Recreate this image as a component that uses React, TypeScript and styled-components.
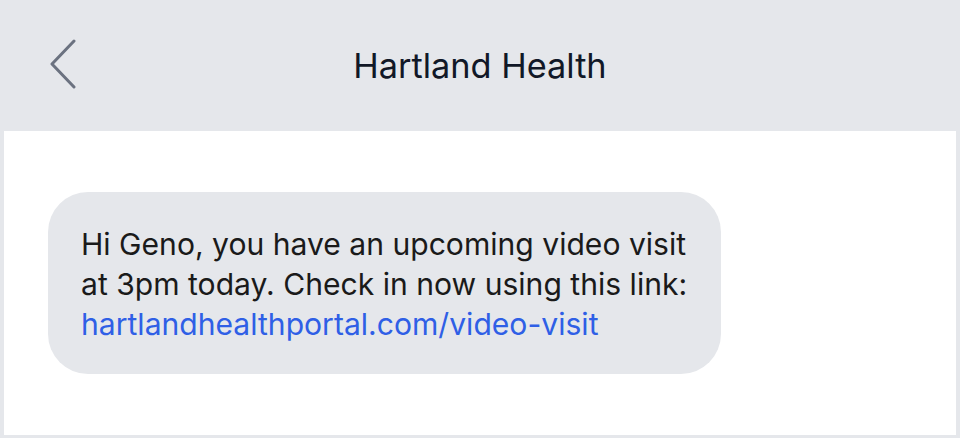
import styled, { createGlobalStyle } from "styled-components";

const GlobalStyle = createGlobalStyle`
  html, body {
    margin: 0;
    padding: 0;
    background: #e5e7eb;
  }
  body {
    font-family: Inter, "Noto Sans", "Liberation Sans", sans-serif;
    -webkit-font-smoothing: antialiased;
  }
`;

const App = () => {
  return (
    <>
      <GlobalStyle />
      <Screen>
        <Header>
          <BackButton aria-label="Back">
            <svg width="28" height="50" viewBox="0 0 28 50" fill="none">
              <path
                d="M25 2 L3 25 L25 48"
                stroke="#6b7280"
                strokeWidth="3"
                strokeLinecap="round"
                strokeLinejoin="round"
              />
            </svg>
          </BackButton>
          <Title>Hartland Health</Title>
        </Header>
        <Thread>
          <Bubble>
            Hi Geno, you have an upcoming video visit
            <br />
            at 3pm today. Check in now using this link:
            <br />
            <Link href="#">hartlandhealthportal.com/video-visit</Link>
          </Bubble>
        </Thread>
      </Screen>
    </>
  );
};

const Screen = styled.div`
  width: 960px;
  height: 438px;
  box-sizing: border-box;
  padding: 0 4px 4px;
  display: flex;
  flex-direction: column;
  background: #e5e7eb;
`;
const Header = styled.header`
  position: relative;
  height: 131px;
  flex-shrink: 0;
  display: flex;
  align-items: center;
  justify-content: center;
`;
const BackButton = styled.button`
  position: absolute;
  left: 45px;
  top: 39px;
  padding: 0;
  border: none;
  background: none;
  display: flex;
`;
const Title = styled.h1`
  margin: 0;
  font-size: 34.3px;
  font-weight: 400;
  color: #111827;
  letter-spacing: 0;
`;
const Thread = styled.main`
  flex: 1;
  background: #ffffff;
  padding: 61px 44px;
`;
const Bubble = styled.div`
  display: inline-block;
  background: #e5e7eb;
  border-radius: 40px;
  padding: 32px 34px 30px 33px;
  font-size: 30.1px;
  line-height: 40px;
  color: #1a1a1a;
`;
const Link = styled.a`
  color: #2f5fe6;
  text-decoration: none;
`;

export default App;
